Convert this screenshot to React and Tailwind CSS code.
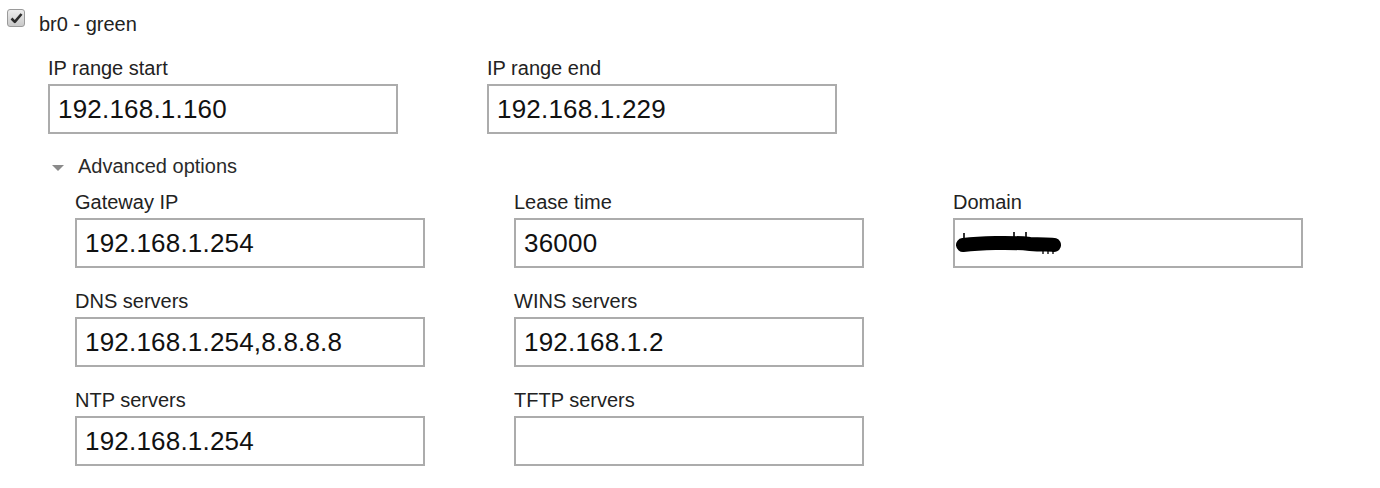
import React from "react";

const Field = ({ label, value }) => (
  <div className="flex flex-col w-[350px]">
    <label className="text-[20px] leading-[23px] text-[#222] pt-[1px]">{label}</label>
    <div className="mt-[4px] h-[50px] border-2 border-[#acacac] bg-white flex items-center pl-[8px] text-[26px] tracking-[0.2px] text-[#111]">
      {value}
    </div>
  </div>
);

const Redacted = () => (
  <svg width="110" height="30" viewBox="0 0 110 30" className="ml-[-8px]">
    <path
      d="M8 17 C 25 15, 55 14, 75 16 C 88 17, 96 16, 99 17"
      stroke="#000"
      strokeWidth="14"
      strokeLinecap="round"
      fill="none"
    />
    <path d="M9 11 L9 5 M59 11 L59 4 M71 11 L71 4" stroke="#000" strokeWidth="1.6" />
    <path d="M88 22 L88 26 M93 22 L93 26 M98 22 L98 26" stroke="#000" strokeWidth="1.3" />
  </svg>
);

export default function App() {
  return (
    <div className="w-[1380px] h-[488px] bg-white font-['Liberation_Sans',Arial,sans-serif] text-[#222]">
      {/* header */}
      <div className="flex items-start pt-[9px] pl-[7px]">
        <div className="w-[18px] h-[18px] rounded-[3px] border border-[#9a9a9a] bg-gradient-to-b from-[#ececec] to-[#c9c9c9] flex items-center justify-center">
          <svg width="13" height="12" viewBox="0 0 13 12">
            <path d="M1.5 6.5 L4.8 9.8 L11.5 2" stroke="#2b2b2b" strokeWidth="2.6" fill="none" strokeLinejoin="round" />
          </svg>
        </div>
        <span className="ml-[14px] mt-[4px] text-[20px] leading-[23px]">br0 - green</span>
      </div>

      {/* range */}
      <div className="pl-[48px] mt-[20px] grid grid-cols-[350px_350px] gap-x-[89px]">
        <Field label="IP range start" value="192.168.1.160" />
        <Field label="IP range end" value="192.168.1.229" />
      </div>

      {/* advanced toggle */}
      <div className="flex items-center pl-[52px] mt-[21px]">
        <svg width="12" height="6" viewBox="0 0 12 6" className="mt-[2px]">
          <path d="M0 0 L12 0 L6 6 Z" fill="#8a8a8a" />
        </svg>
        <span className="ml-[14px] text-[20px] leading-[23px] text-[#2a2a2a]">Advanced options</span>
      </div>

      {/* advanced fields */}
      <div className="pl-[75px] mt-[12px] grid grid-cols-[350px_350px_350px] gap-x-[89px] gap-y-[21px]">
        <Field label="Gateway IP" value="192.168.1.254" />
        <Field label="Lease time" value="36000" />
        <Field label="Domain" value={<Redacted />} />
        <Field label="DNS servers" value="192.168.1.254,8.8.8.8" />
        <Field label="WINS servers" value="192.168.1.2" />
        <div />
        <Field label="NTP servers" value="192.168.1.254" />
        <Field label="TFTP servers" value="" />
      </div>
    </div>
  );
}
